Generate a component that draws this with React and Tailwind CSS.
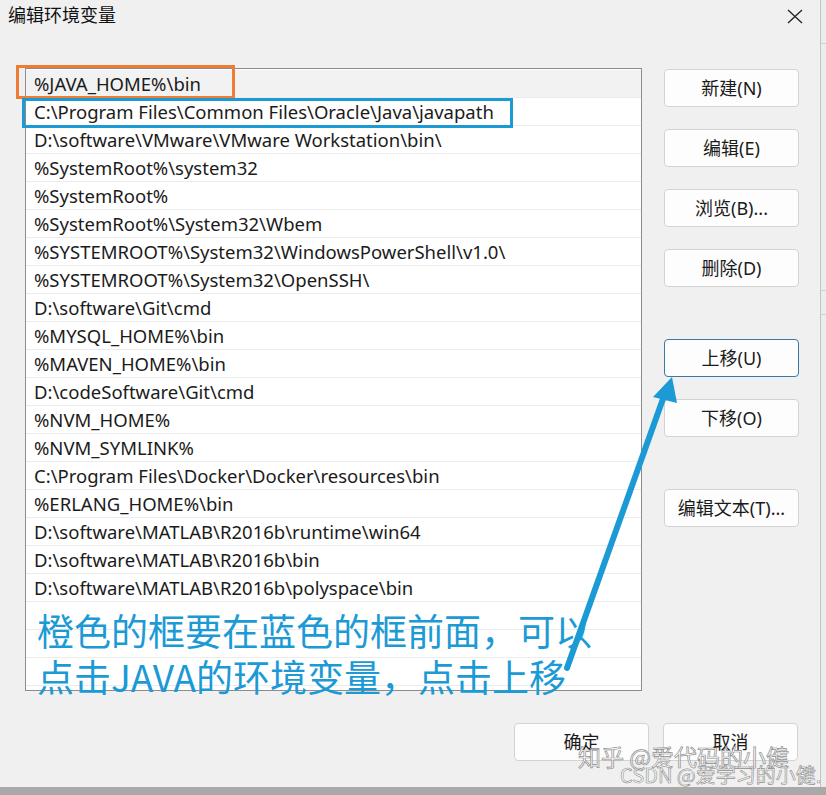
import React from "react";

const rows = [
  "%JAVA_HOME%\\bin",
  "C:\\Program Files\\Common Files\\Oracle\\Java\\javapath",
  "D:\\software\\VMware\\VMware Workstation\\bin\\",
  "%SystemRoot%\\system32",
  "%SystemRoot%",
  "%SystemRoot%\\System32\\Wbem",
  "%SYSTEMROOT%\\System32\\WindowsPowerShell\\v1.0\\",
  "%SYSTEMROOT%\\System32\\OpenSSH\\",
  "D:\\software\\Git\\cmd",
  "%MYSQL_HOME%\\bin",
  "%MAVEN_HOME%\\bin",
  "D:\\codeSoftware\\Git\\cmd",
  "%NVM_HOME%",
  "%NVM_SYMLINK%",
  "C:\\Program Files\\Docker\\Docker\\resources\\bin",
  "%ERLANG_HOME%\\bin",
  "D:\\software\\MATLAB\\R2016b\\runtime\\win64",
  "D:\\software\\MATLAB\\R2016b\\bin",
  "D:\\software\\MATLAB\\R2016b\\polyspace\\bin",
  "",
  "",
  "",
  "",
];

function Btn({ children, focused }) {
  return (
    <div
      className={
        "h-[38px] w-[135px] rounded-[4px] flex items-center justify-center text-[18px] text-[#1a1a1a] bg-[#fdfdfd] border " +
        (focused ? "border-[#3a78a8]" : "border-[#d3d3d3]")
      }
    >
      {children}
    </div>
  );
}

export default function App() {
  return (
    <div
      className="relative w-[826px] h-[795px] overflow-hidden bg-[#a9a9a9]"
      style={{ fontFamily: '"Noto Sans", "Noto Sans CJK SC", sans-serif' }}
    >
      <div className="flex h-[787px]">
        <div className="w-[821px] h-full bg-[#f0f0f0] border-r border-[#c4c4c4] flex flex-col">
          {/* title bar */}
          <div className="h-[30px] flex items-center justify-between">
            <div className="pl-[8px] pt-[1px] text-[18px] text-[#111] whitespace-nowrap">
              编辑环境变量
            </div>
            <svg width="16" height="15" viewBox="0 0 16 15" className="mr-[17px] mt-[2px]">
              <path d="M1 1 L15 14 M15 1 L1 14" stroke="#222" strokeWidth="1.3" fill="none" />
            </svg>
          </div>

          <div className="flex mt-[38px] ml-[25px]">
            {/* list box */}
            <div className="w-[617px] h-[623px] border border-[#8c8c8c] bg-white overflow-hidden pt-[1px]">
              {rows.map((r, i) => (
                <div
                  key={i}
                  className={
                    "h-[28px] border-b border-[#ececec] pl-[8px] flex items-center text-[18.5px] text-[#1b1b1b] whitespace-nowrap " +
                    (i === 0 ? "bg-[#f2f2f2]" : "bg-white")
                  }
                >
                  {r}
                </div>
              ))}
            </div>

            {/* buttons column */}
            <div className="ml-[22px] mt-[1px] flex flex-col">
              <Btn>新建(N)</Btn>
              <div className="mt-[22px]"><Btn>编辑(E)</Btn></div>
              <div className="mt-[22px]"><Btn>浏览(B)...</Btn></div>
              <div className="mt-[22px]"><Btn>删除(D)</Btn></div>
              <div className="mt-[52px]"><Btn focused>上移(U)</Btn></div>
              <div className="mt-[22px]"><Btn>下移(O)</Btn></div>
              <div className="mt-[52px]"><Btn>编辑文本(T)...</Btn></div>
            </div>
          </div>

          {/* bottom buttons */}
          <div className="flex justify-end gap-[14px] mt-[32px] pr-[22px]">
            <Btn>确定</Btn>
            <Btn>取消</Btn>
          </div>
        </div>
        <div className="flex-1 bg-[#ececec] flex flex-col">
          <div className="h-[44px] border-b border-[#cfcfcf]"></div>
          <div className="h-[247px] border-b border-[#cfcfcf]"></div>
          <div className="h-[24px] border-b border-[#cfcfcf]"></div>
        </div>
      </div>

      {/* orange & blue annotation boxes */}
      <div className="absolute left-[16px] top-[65px] w-[219px] h-[34px] border-[3px] border-[#ee7d33]"></div>
      <div className="absolute left-[22px] top-[98px] w-[491px] h-[30px] border-[3px] border-[#1b9ad6]"></div>

      {/* annotation text */}
      <div
        className="absolute left-[37px] top-[607px] text-[37px] leading-[46px] text-[#1b9ad6] whitespace-nowrap"
        style={{ fontFamily: '"Noto Sans CJK SC", "Noto Sans", sans-serif' }}
      >
        <div>橙色的框要在蓝色的框前面，可以</div>
        <div>点击JAVA的环境变量，点击上移</div>
      </div>

      {/* arrow */}
      <svg className="absolute left-0 top-0 pointer-events-none" width="826" height="795" viewBox="0 0 826 795">
        <line x1="567" y1="668" x2="664" y2="396" stroke="#1b9ad6" strokeWidth="6" strokeLinecap="round" />
        <polygon points="672,377 653,397 677,403" fill="#1b9ad6" />
      </svg>

      {/* watermarks */}
      <div
        className="absolute left-[578px] top-[741px] text-[23px] leading-[30px] text-white/70 whitespace-nowrap [-webkit-text-stroke:0.7px_#8d8d8d]"
        style={{ fontFamily: '"Noto Sans CJK SC", sans-serif' }}
      >
        知乎 @爱代码的小健
      </div>
      <div
        className="absolute left-[620px] top-[763px] text-[20px] leading-[24px] text-white/70 whitespace-nowrap [-webkit-text-stroke:0.6px_#8d8d8d]"
        style={{ fontFamily: '"Noto Sans CJK SC", sans-serif' }}
      >
        CSDN @爱学习的小健.
      </div>
    </div>
  );
}
